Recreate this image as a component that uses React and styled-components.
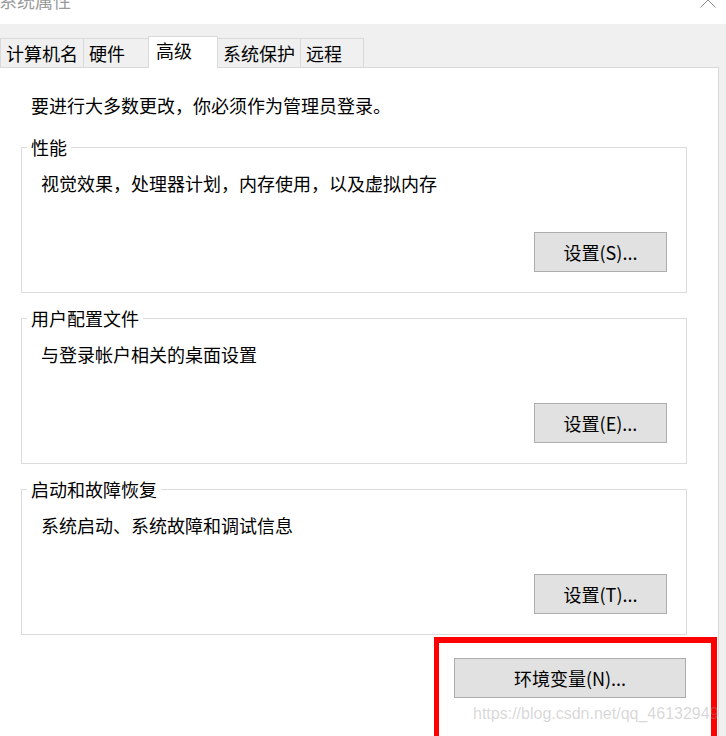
import React from "react";
import styled, { createGlobalStyle } from "styled-components";

const Global = createGlobalStyle`
  html, body {
    margin: 0;
    padding: 0;
    background: #f0f0f0;
    overflow: hidden;
  }
  body {
    font-family: "Noto Sans CJK SC", "Noto Sans", sans-serif;
  }
`;

const Window = styled.div`
  position: relative;
  width: 726px;
  height: 736px;
  overflow: hidden;
  display: flex;
  flex-direction: column;
  background: #f0f0f0;
  font-family: "Noto Sans CJK SC", "Noto Sans", sans-serif;
  font-size: 18px;
  color: #000;
`;

const TitleBar = styled.div`
  height: 24px;
  flex: none;
  background: #fff;
  display: flex;
  justify-content: space-between;
  align-items: flex-start;
  overflow: hidden;
`;

const Title = styled.div`
  margin-top: -12px;
  margin-left: -1px;
  line-height: 24px;
  color: #9a9a9a;
`;

const CloseIcon = styled.svg`
  flex: none;
  margin-top: -8px;
  margin-right: 10px;
`;

const TabStrip = styled.div`
  height: 43px;
  flex: none;
  display: flex;
  align-items: flex-end;
`;

const Tab = styled.div`
  position: relative;
  box-sizing: border-box;
  width: ${(p) => p.$w}px;
  height: ${(p) => (p.$active ? 32 : 29)}px;
  margin-left: ${(p) => (p.$first ? 0 : -1)}px;
  margin-bottom: ${(p) => (p.$active ? -1 : 0)}px;
  z-index: ${(p) => (p.$active ? 2 : 1)};
  padding: ${(p) => (p.$active ? "1px 0 0 7px" : "2px 0 0 5px")};
  border: 1px solid #d9d9d9;
  border-bottom: none;
  background: ${(p) => (p.$active ? "#fff" : "#f0f0f0")};
  line-height: 24px;
  white-space: nowrap;
`;

const Panel = styled.div`
  box-sizing: border-box;
  width: 719px;
  flex: 1;
  background: #fff;
  border-top: 1px solid #d9d9d9;
  border-right: 1px solid #d9d9d9;
  padding: 25px 31px 0 21px;
  display: flex;
  flex-direction: column;
`;

const Intro = styled.p`
  margin: 0 0 19px 0;
  padding-left: 10px;
  line-height: 24px;
`;

const Group = styled.fieldset`
  margin: 0;
  padding: 0 0 0 5px;
  min-width: 0;
  border: 1px solid #dcdcdc;
  & + & {
    margin-top: 14px;
  }
`;

const Legend = styled.legend`
  padding: 0 4px;
  line-height: 23px;
`;

const Desc = styled.div`
  margin: 12px 0 0 14px;
  line-height: 24px;
`;

const ButtonRow = styled.div`
  display: flex;
  justify-content: flex-end;
  margin: 37px 19px 20px 0;
`;

const Button = styled.button`
  box-sizing: border-box;
  width: ${(p) => p.$w}px;
  height: 40px;
  padding: 0;
  background: #e1e1e1;
  border: 1px solid #adadad;
  border-radius: 0;
  font: inherit;
  font-size: 18px;
  color: #000;
  line-height: 24px;
`;

const EnvRow = styled.div`
  display: flex;
  justify-content: flex-end;
  margin: 2px -30px 0 0;
`;

const RedFrame = styled.div`
  border-style: solid;
  border-color: #ff0000;
  border-width: 6px 6px 6px 5px;
  padding: 15px 25px 60px 15px;
`;

const Watermark = styled.div`
  position: absolute;
  left: 473px;
  top: 705px;
  font-family: "Liberation Sans", Arial, sans-serif;
  font-size: 16px;
  line-height: 18px;
  color: rgba(150, 150, 150, 0.38);
  white-space: nowrap;
  pointer-events: none;
`;

const tabs = [
  { label: "计算机名", w: 84 },
  { label: "硬件", w: 66 },
  { label: "高级", w: 70, active: true },
  { label: "系统保护", w: 84 },
  { label: "远程", w: 64 },
];

const groups = [
  { title: "性能", desc: "视觉效果，处理器计划，内存使用，以及虚拟内存", btn: "设置(S)..." },
  { title: "用户配置文件", desc: "与登录帐户相关的桌面设置", btn: "设置(E)..." },
  { title: "启动和故障恢复", desc: "系统启动、系统故障和调试信息", btn: "设置(T)..." },
];

export default function App() {
  return (
    <>
      <Global />
      <Window>
        <TitleBar>
          <Title>系统属性</Title>
          <CloseIcon width="16" height="16" viewBox="0 0 16 16">
            <path d="M0.5 0.5 L15.5 15.5 M15.5 0.5 L0.5 15.5" stroke="#8a8a8a" strokeWidth="1" fill="none" />
          </CloseIcon>
        </TitleBar>
        <TabStrip>
          {tabs.map((t, i) => (
            <Tab key={t.label} $w={t.w} $active={t.active} $first={i === 0}>
              {t.label}
            </Tab>
          ))}
        </TabStrip>
        <Panel>
          <Intro>要进行大多数更改，你必须作为管理员登录。</Intro>
          {groups.map((g) => (
            <Group key={g.title}>
              <Legend>{g.title}</Legend>
              <Desc>{g.desc}</Desc>
              <ButtonRow>
                <Button $w={133}>{g.btn}</Button>
              </ButtonRow>
            </Group>
          ))}
          <EnvRow>
            <RedFrame>
              <Button $w={232}>环境变量(N)...</Button>
            </RedFrame>
          </EnvRow>
        </Panel>
        <Watermark>https://blog.csdn.net/qq_46132949</Watermark>
      </Window>
    </>
  );
}
